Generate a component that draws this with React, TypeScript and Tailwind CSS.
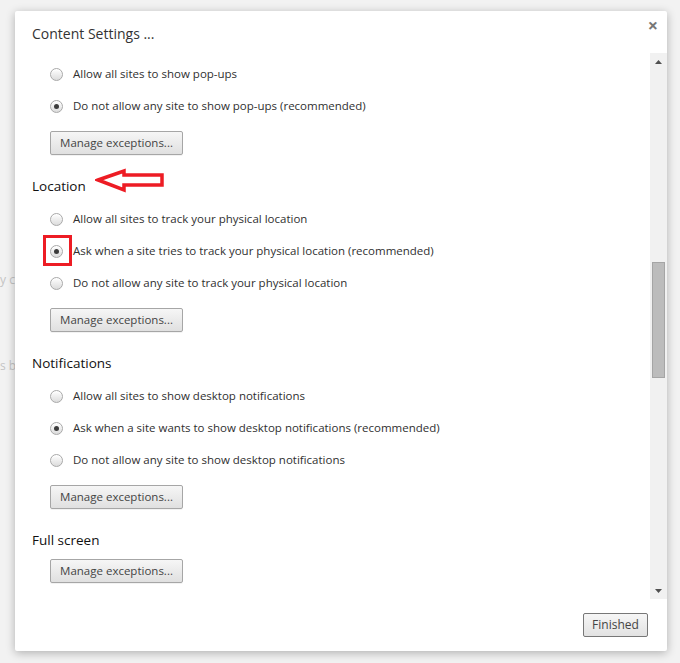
import React from "react";

const font = { fontFamily: '"Segoe UI", "Open Sans", "Noto Sans", sans-serif' };

function Radio({ checked, marked }: { checked?: boolean; marked?: boolean }) {
  return (
    <span className="relative flex h-[13px] w-[13px] shrink-0 items-center justify-center rounded-full border border-[#a9a9a9] bg-gradient-to-b from-[#ffffff] to-[#dcdcdc] shadow-[inset_0_1px_1px_rgba(255,255,255,0.9)]">
      {checked && <span className="h-[5px] w-[5px] rounded-full bg-[#3c3c3c]" />}
      {marked && (
        <span className="absolute left-[-8px] top-[-11px] h-[31px] w-[29px] border-[3px] border-[#ed1c24]" />
      )}
    </span>
  );
}

function Option({ label, checked, marked }: { label: string; checked?: boolean; marked?: boolean }) {
  return (
    <div className="flex h-8 items-center gap-[10px] pl-[35px]">
      <Radio checked={checked} marked={marked} />
      <span className="text-[11.5px] text-[#303030]">{label}</span>
    </div>
  );
}

function ManageButton({ className = "" }: { className?: string }) {
  return (
    <div className={"flex pl-[35px] " + className}>
      <button className="h-6 w-[133px] rounded-[2px] border border-[#a6a6a6] bg-gradient-to-b from-[#f6f6f6] to-[#e0e0e0] text-[11.5px] leading-none text-[#444] shadow-[0_1px_0_rgba(0,0,0,0.05)]">
        Manage exceptions...
      </button>
    </div>
  );
}

function Heading({ title, arrow }: { title: string; arrow?: boolean }) {
  return (
    <div className="relative flex h-[22px] items-center pl-[17px] text-[13.5px] text-[#111]">
      {title}
      {arrow && (
        <svg className="absolute left-[80px] top-[-7px]" width="72" height="26" viewBox="0 0 72 26">
          <polygon
            points="3,12 29,3 29,7 67,7 67,17 29,17 29,22"
            fill="none"
            stroke="#ed1c24"
            strokeWidth="3.5"
            strokeLinejoin="miter"
          />
        </svg>
      )}
    </div>
  );
}

export default function App() {
  return (
    <div className="relative h-[663px] w-[680px] overflow-hidden bg-[#f2f2f2]" style={font}>
      <div className="absolute left-0 top-[271px] text-[12px] text-[#c4c4c4]">y c</div>
      <div className="absolute left-0 top-[357px] text-[12px] text-[#c4c4c4]">s b</div>

      <div className="absolute left-[15px] top-[11px] flex h-[640px] w-[652px] flex-col rounded-[2px] bg-white shadow-[0_2px_10px_rgba(0,0,0,0.28)]">
        <div className="relative flex h-[42px] shrink-0 items-center pl-[17px] pt-[2px] text-[14px] text-[#333]">
          Content Settings ...
          <span className="absolute right-[9px] top-[1px] text-[18px] font-bold text-[#777]">×</span>
        </div>

        <div className="flex h-[546px] shrink-0">
          <div className="flex-1 pt-[5px]">
            <Option label="Allow all sites to show pop-ups" />
            <Option label="Do not allow any site to show pop-ups (recommended)" checked />
            <ManageButton className="mt-[9px]" />

            <div className="mt-5">
              <Heading title="Location" arrow />
            </div>
            <div className="mt-[6px]">
              <Option label="Allow all sites to track your physical location" />
              <Option label="Ask when a site tries to track your physical location (recommended)" checked marked />
              <Option label="Do not allow any site to track your physical location" />
            </div>
            <ManageButton className="mt-[9px]" />

            <div className="mt-5">
              <Heading title="Notifications" />
            </div>
            <div className="mt-[6px]">
              <Option label="Allow all sites to show desktop notifications" />
              <Option label="Ask when a site wants to show desktop notifications (recommended)" checked />
              <Option label="Do not allow any site to show desktop notifications" />
            </div>
            <ManageButton className="mt-[9px]" />

            <div className="mt-5">
              <Heading title="Full screen" />
            </div>
            <ManageButton className="mt-2" />
          </div>

          <div className="flex w-[17px] flex-col items-center bg-[#f1f1f1]">
            <div className="flex h-[17px] w-full items-center justify-center">
              <svg width="7" height="4" viewBox="0 0 7 4"><polygon points="0,4 3.5,0 7,4" fill="#505050" /></svg>
            </div>
            <div className="flex-1 w-full px-[2px]">
              <div className="mt-[192px] h-[116px] w-full border border-[#a5a5a5] bg-[#bcbcbc]" />
            </div>
            <div className="flex h-[17px] w-full items-center justify-center">
              <svg width="7" height="4" viewBox="0 0 7 4"><polygon points="0,0 7,0 3.5,4" fill="#505050" /></svg>
            </div>
          </div>
        </div>

        <div className="flex flex-1 items-start justify-end pr-[19px] pt-[14px]">
          <button className="h-6 w-[65px] rounded-[2px] border border-[#777] bg-gradient-to-b from-[#f6f6f6] to-[#e2e2e2] text-[12px] leading-none text-[#444]">
            Finished
          </button>
        </div>
      </div>
    </div>
  );
}
